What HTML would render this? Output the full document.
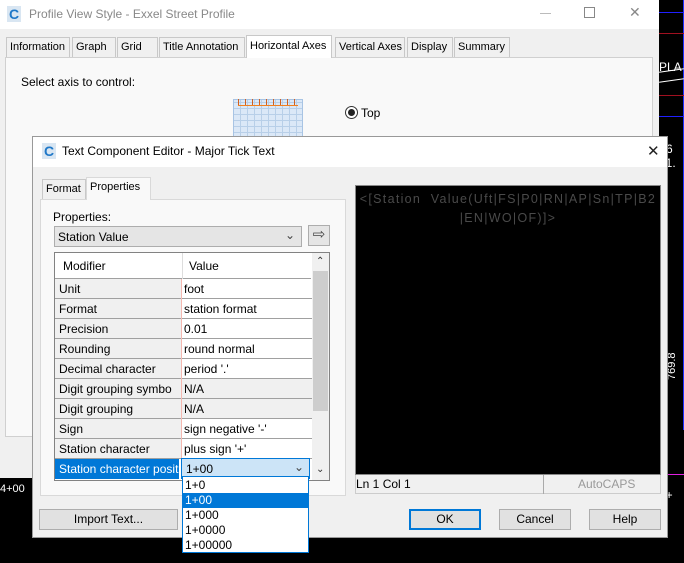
<!DOCTYPE html>
<html><head><meta charset="utf-8"><style>
*{box-sizing:border-box;margin:0;padding:0}
body{width:684px;height:563px;background:#000;position:relative;overflow:hidden;font-family:"Liberation Sans",sans-serif;font-size:12px;color:#000}
.a{position:absolute}
.tab{position:absolute;top:37px;height:20px;border:1px solid #c8c8c8;border-bottom:none;background:#f0f0f0;padding:3px 0 0 3px;font-size:11px;white-space:nowrap;overflow:hidden}
.row{position:absolute;left:0;width:256px;height:20px;border-bottom:1px solid #a0a0a0}
.row span{position:absolute;top:3px;font-size:12px;white-space:nowrap}
.btn{position:absolute;height:21px;background:#e1e1e1;border:1px solid #adadad;text-align:center;line-height:19px;font-size:12px}
.ic{position:absolute;width:14px;height:16px;background:#d9e6f2;color:#1f78c8;font-weight:bold;font-size:14px;line-height:16px;text-align:center}
</style></head><body>
<!-- right CAD strip -->
<div class="a" style="left:659px;top:0;width:25px;height:563px;background:#000">
<div class="a" style="left:24px;top:0;width:1px;height:430px;background:#2030ff"></div>
<div class="a" style="left:0;top:12px;width:25px;height:1px;background:#2020ff"></div>
<div class="a" style="left:0;top:33px;width:25px;height:1px;background:#a01020"></div>
<div class="a" style="left:0;top:95px;width:25px;height:1px;background:#a01020"></div>
<div class="a" style="left:0;top:116px;width:25px;height:1px;background:#2020ff"></div>
<div class="a" style="left:0;top:60px;color:#fff;font-size:12px">PLA</div>
<div class="a" style="left:0;top:70px;width:25px;height:1px;background:#fff;transform:rotate(-8deg)"></div>
<div class="a" style="left:0;top:80px;width:25px;height:1px;background:#fff;transform:rotate(-8deg)"></div>
<div class="a" style="left:0;top:142px;color:#fff;font-size:12px">+6</div>
<div class="a" style="left:0;top:156px;color:#fff;font-size:12px">61.</div>
<div class="a" style="left:0;top:488px;color:#fff;font-size:12px">7+</div>
<div class="a" style="left:0;top:474px;width:25px;height:1px;background:#e020e0"></div>
<div class="a" style="left:7px;top:380px;color:#fff;font-size:11px;transform:rotate(-90deg);transform-origin:left top">769.8</div>
</div>
<div class="a" style="left:0;top:483px;color:#fff;font-size:11px">4+00</div>
<!-- outer window -->
<div class="a" style="left:0;top:0;width:659px;height:478px;background:#f0f0f0">
<div class="a" style="left:0;top:0;width:659px;height:29px;background:#fff"></div>
<div class="ic" style="left:7px;top:6px">C</div>
<div class="a" style="left:29px;top:7px;color:#888;font-size:12px">Profile View Style - Exxel Street Profile</div>
<div class="a" style="left:540px;top:13px;width:11px;height:1px;background:#bbb"></div>
<div class="a" style="left:584px;top:7px;width:11px;height:11px;border:1px solid #888"></div>
<div class="a" style="left:629px;top:4px;font-size:14px;color:#888">✕</div>
<div class="a" style="left:5px;top:57px;width:648px;height:380px;border:1px solid #d0d0d0;background:#f9f9f9"></div>
<div class="tab" style="left:6px;width:64px">Information</div>
<div class="tab" style="left:72px;width:44px">Graph</div>
<div class="tab" style="left:117px;width:41px">Grid</div>
<div class="tab" style="left:159px;width:86px">Title Annotation</div>
<div class="tab" style="left:246px;width:86px;top:35px;height:23px;background:#fff;padding-top:4px">Horizontal Axes</div>
<div class="tab" style="left:335px;width:70px">Vertical Axes</div>
<div class="tab" style="left:407px;width:46px">Display</div>
<div class="tab" style="left:454px;width:56px">Summary</div>
<div class="a" style="left:21px;top:75px;font-size:12px">Select axis to control:</div>
<div class="a" style="left:233px;top:99px;width:70px;height:40px;background:#dbe8f7;border:1px solid #a8c4e4;
background-image:linear-gradient(#b8cfe8 1px,transparent 1px),linear-gradient(90deg,#b8cfe8 1px,transparent 1px);background-size:7px 6px;background-position:6px 8px"></div>
<div class="a" style="left:238px;top:99px;width:60px;height:7px;border-bottom:1px solid #f08020;background:repeating-linear-gradient(90deg,#d06020 0 1px,transparent 1px 7px)"></div>
<div class="a" style="left:345px;top:106px;width:13px;height:13px;border:1px solid #333;border-radius:50%;background:#fff"></div>
<div class="a" style="left:348px;top:109px;width:7px;height:7px;border-radius:50%;background:#222"></div>
<div class="a" style="left:361px;top:106px;font-size:12px">Top</div>
</div>
<!-- inner dialog -->
<div class="a" style="left:32px;top:136px;width:636px;height:402px;background:#f0f0f0;border:1px solid #999">
<div class="a" style="left:0;top:0;width:634px;height:30px;background:#fff"></div>
<div class="ic" style="left:9px;top:6px">C</div>
<div class="a" style="left:29px;top:7px;font-size:12px">Text Component Editor - Major Tick Text</div>
<div class="a" style="left:614px;top:5px;font-size:15px;color:#222">✕</div>
<div class="a" style="left:7px;top:62px;width:306px;height:297px;border:1px solid #d9d9d9;background:#f9f9f9"></div>
<div class="tab" style="left:9px;top:42px;width:44px">Format</div>
<div class="tab" style="left:53px;top:40px;width:65px;height:23px;background:#f9f9f9;border-color:#d9d9d9">Properties</div>
<div class="a" style="left:20px;top:73px">Properties:</div>
<div class="a" style="left:21px;top:89px;width:248px;height:21px;background:#e5e5e5;border:1px solid #adadad"><span class="a" style="left:3px;top:3px">Station Value</span><span class="a" style="right:6px;top:1px;font-size:12px;color:#444">⌄</span></div>
<div class="a" style="left:275px;top:88px;width:22px;height:21px;background:#e5e5e5;border:1px solid #adadad;text-align:center;font-size:15px;line-height:18px;color:#444">⇨</div>
<div class="a" style="left:21px;top:115px;width:276px;height:229px;background:#fff;border:1px solid #828282">
<div class="a" style="left:257px;top:0;width:17px;height:227px;background:#f0f0f0"></div>
<div class="a" style="left:258px;top:18px;width:15px;height:140px;background:#cdcdcd"></div>
<div class="a" style="left:261px;top:3px;font-size:10px;color:#333">⌃</div>
<div class="a" style="left:261px;top:211px;font-size:10px;color:#333">⌄</div>
<div class="a" style="left:0;top:0;width:256px;height:26px;border-bottom:1px solid #a0a0a0"><span class="a" style="left:8px;top:6px">Modifier</span><span class="a" style="left:134px;top:6px">Value</span><div class="a" style="left:127px;top:0;width:1px;height:26px;background:#ddd"></div></div>
<div class="row" style="top:26px;background:#f0f0f0"><span style="left:4px">Unit</span></div>
<div class="row" style="top:46px;background:#f0f0f0"><span style="left:4px">Format</span></div>
<div class="row" style="top:66px;background:#f0f0f0"><span style="left:4px">Precision</span></div>
<div class="row" style="top:86px;background:#f0f0f0"><span style="left:4px">Rounding</span></div>
<div class="row" style="top:106px;background:#f0f0f0"><span style="left:4px">Decimal character</span></div>
<div class="row" style="top:126px;background:#f0f0f0"><span style="left:4px">Digit grouping symbo</span></div>
<div class="row" style="top:146px;background:#f0f0f0"><span style="left:4px">Digit grouping</span></div>
<div class="row" style="top:166px;background:#f0f0f0"><span style="left:4px">Sign</span></div>
<div class="row" style="top:186px;background:#f0f0f0"><span style="left:4px">Station character</span></div>
<div class="a" style="left:126px;top:26px;width:130px;height:180px;background:#fff;border-left:1px solid #f4b8b0">
<div class="a" style="left:0;top:100px;width:130px;height:40px;background:#f0f0f0"></div>
<div class="a" style="left:0;top:19px;width:130px;height:1px;background:#a0a0a0"></div>
<div class="a" style="left:0;top:39px;width:130px;height:1px;background:#a0a0a0"></div>
<div class="a" style="left:0;top:59px;width:130px;height:1px;background:#a0a0a0"></div>
<div class="a" style="left:0;top:79px;width:130px;height:1px;background:#a0a0a0"></div>
<div class="a" style="left:0;top:99px;width:130px;height:1px;background:#a0a0a0"></div>
<div class="a" style="left:0;top:119px;width:130px;height:1px;background:#a0a0a0"></div>
<div class="a" style="left:0;top:139px;width:130px;height:1px;background:#a0a0a0"></div>
<div class="a" style="left:0;top:159px;width:130px;height:1px;background:#a0a0a0"></div>
<div class="a" style="left:0;top:179px;width:130px;height:1px;background:#a0a0a0"></div>
<span class="a" style="left:2px;top:3px">foot</span>
<span class="a" style="left:2px;top:23px">station format</span>
<span class="a" style="left:2px;top:43px">0.01</span>
<span class="a" style="left:2px;top:63px">round normal</span>
<span class="a" style="left:2px;top:83px">period '.'</span>
<span class="a" style="left:2px;top:103px">N/A</span>
<span class="a" style="left:2px;top:123px">N/A</span>
<span class="a" style="left:2px;top:143px">sign negative '-'</span>
<span class="a" style="left:2px;top:163px">plus sign '+'</span>
</div>
<div class="a" style="left:0;top:206px;width:124px;height:20px;background:#0078d7;color:#fff;overflow:hidden"><span class="a" style="left:4px;top:3px;white-space:nowrap">Station character posit</span></div>
<div class="a" style="left:126px;top:205px;width:129px;height:21px;background:#cce4f7;border:1px solid #0078d7"><span class="a" style="left:4px;top:3px">1+00</span><span class="a" style="right:5px;top:1px;color:#444">⌄</span></div>
</div>
<div class="a" style="left:322px;top:48px;width:306px;height:290px;background:#000;border:1px solid #888;padding:4px 2px;font-size:12.5px;color:#4a4a4a;letter-spacing:1.3px;text-align:center;line-height:19px;white-space:nowrap">&lt;[Station&nbsp; Value(Uft|FS|P0|RN|AP|Sn|TP|B2<br>|EN|WO|OF)]&gt;</div>
<div class="a" style="left:322px;top:338px;width:306px;height:19px;border:1px solid #ccc;border-top:none;background:#f0f0f0"><span class="a" style="left:0;top:2px">Ln 1 Col 1</span><div class="a" style="left:187px;top:0;width:1px;height:19px;background:#aaa"></div><span class="a" style="left:222px;top:2px;color:#999">AutoCAPS</span></div>
<div class="btn" style="left:6px;top:372px;width:139px">Import Text...</div>
<div class="btn" style="left:376px;top:372px;width:72px;border:2px solid #0078d7;line-height:17px">OK</div>
<div class="btn" style="left:466px;top:372px;width:72px">Cancel</div>
<div class="btn" style="left:556px;top:372px;width:72px">Help</div>
</div>
<!-- dropdown list -->
<div class="a" style="left:182px;top:476px;width:127px;height:77px;background:#fff;border:1px solid #0078d7">
<div class="a" style="left:2px;top:1px">1+0</div>
<div class="a" style="left:0;top:16px;width:125px;height:15px;background:#0078d7;color:#fff;padding-left:2px">1+00</div>
<div class="a" style="left:2px;top:31px">1+000</div>
<div class="a" style="left:2px;top:46px">1+0000</div>
<div class="a" style="left:2px;top:61px">1+00000</div>
</div>
</body></html>
